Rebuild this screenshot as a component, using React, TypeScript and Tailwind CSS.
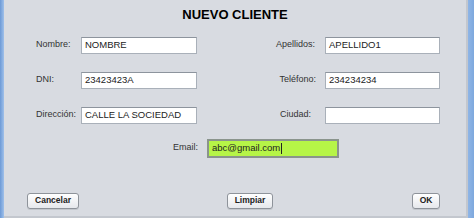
import React from "react";

const font = { fontFamily: '"Liberation Sans", Arial, sans-serif' };

function Field({ value }: { value?: string }) {
	return (
		<div className="flex h-[17px] w-full items-center border border-[#a9b0b9] border-t-[#8d949d] bg-white px-[3px] text-[9.5px] text-[#222]">
			{value}
		</div>
	);
}

function Row({
	left,
	leftValue,
	right,
	rightValue,
	rightPad,
}: {
	left: string;
	leftValue?: string;
	right: string;
	rightValue?: string;
	rightPad: string;
}) {
	return (
		<div className="flex items-center">
			<div className="w-[81px] pl-[36px] text-[9px] text-[#333]">{left}</div>
			<div className="w-[116px]">
				<Field value={leftValue} />
			</div>
			<div className={`w-[128px] text-right text-[9px] text-[#333] ${rightPad}`}>{right}</div>
			<div className="w-[115px]">
				<Field value={rightValue} />
			</div>
		</div>
	);
}

function Btn({ label, w }: { label: string; w: string }) {
	return (
		<button
			className={`flex h-[16px] ${w} items-center justify-center rounded-[3px] border border-[#8e939a] bg-gradient-to-b from-white to-[#e6e8ec] text-[8.5px] font-bold text-[#222] shadow-[0_1px_0_#c2c6cc]`}
		>
			{label}
		</button>
	);
}

export default function App() {
	return (
		<div className="flex h-[218px] w-[474px] bg-[#7ea8dd]" style={font}>
			<div className="w-[4px] bg-gradient-to-r from-[#6d9ad6] to-[#9fc0ea]" />
			<div className="flex flex-1 flex-col border-r-2 border-b-2 border-[#c3c7ce] bg-[#d8dbe1]">
				<div className="pt-[5px] text-center text-[13px] font-bold text-black">NUEVO CLIENTE</div>
				<div className="mt-[12px] -ml-[4px] flex flex-col gap-[18px]">
					<Row left="Nombre:" leftValue="NOMBRE" right="Apellidos:" rightValue="APELLIDO1" rightPad="pr-[10px]" />
					<Row left="DNI:" leftValue="23423423A" right="Teléfono:" rightValue="234234234" rightPad="pr-[9px]" />
					<Row left="Dirección:" leftValue="CALLE LA SOCIEDAD" right="Ciudad:" rightPad="pr-[14px]" />
				</div>
				<div className="mt-[15px] -ml-[4px] flex items-center">
					<div className="w-[198px] text-right text-[9px] text-[#333]">Email:</div>
					<div className="ml-[9px] flex h-[19px] w-[132px] items-center border-2 border-[#8a948c] bg-[#b6f547] px-[3px] text-[9.5px] text-[#222]">
						abc@gmail.com
						<span className="ml-[1px] inline-block h-[11px] w-[1px] bg-[#222]" />
					</div>
				</div>
				<div className="mt-[35px] -ml-[4px] flex items-center">
					<div className="ml-[27px]">
						<Btn label="Cancelar" w="w-[52px]" />
					</div>
					<div className="ml-[148px]">
						<Btn label="Limpiar" w="w-[46px]" />
					</div>
					<div className="ml-[139px]">
						<Btn label="OK" w="w-[28px]" />
					</div>
				</div>
			</div>
			<div className="w-[6px] bg-gradient-to-r from-[#8fb5e6] to-[#7ea8dd]" />
		</div>
	);
}
